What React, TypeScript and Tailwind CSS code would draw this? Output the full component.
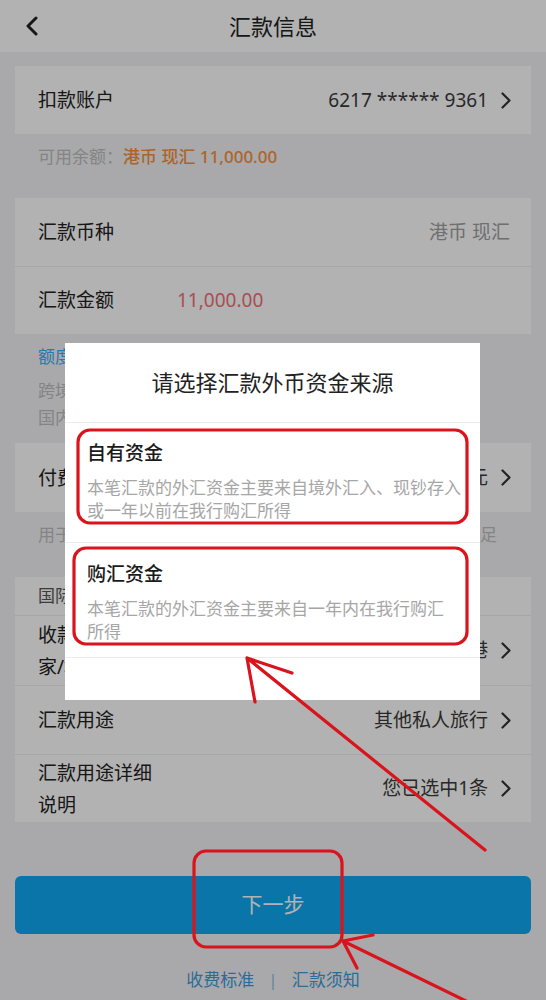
import type { ReactNode } from 'react'

function Chevron() {
  return (
    <svg width="10" height="17" viewBox="0 0 10 17" className="shrink-0">
      <path d="M1.5 1.5 L8.5 8.5 L1.5 15.5" fill="none" stroke="#333" strokeWidth="2.2" strokeLinecap="round" strokeLinejoin="round" />
    </svg>
  )
}

function Row({ label, children, className = '' }: { label: ReactNode; children?: ReactNode; className?: string }) {
  return (
    <div className={`flex items-center justify-between pl-[23px] pr-[20px] ${className}`}>
      <div className="w-[118px] text-[19px] leading-[32px] text-[#222]">{label}</div>
      {children}
    </div>
  )
}

function Value({ text }: { text: string }) {
  return (
    <div className="flex items-center gap-[13px] text-[19px] text-[#3a3a3a]">
      <span className="whitespace-nowrap">{text}</span>
      <Chevron />
    </div>
  )
}

const sources = [
  {
    title: '自有资金',
    lines: ['本笔汇款的外汇资金主要来自境外汇入、现钞存入', '或一年以前在我行购汇所得'],
    h: 'h-[120px] pt-[16px]',
  },
  {
    title: '购汇资金',
    lines: ['本笔汇款的外汇资金主要来自一年内在我行购汇', '所得'],
    h: 'h-[115px] pt-[17px]',
  },
]

export default function App() {
  return (
    <div className="relative h-[1000px] overflow-hidden bg-[#f2f2f6] font-['Noto_Sans','Noto_Sans_CJK_SC',sans-serif]">
      <header className="grid h-[52px] grid-cols-[60px_1fr_60px] items-center bg-white">
        <svg width="14" height="20" viewBox="0 0 14 20" className="ml-[25px]">
          <path d="M11 2 L3 10 L11 18" fill="none" stroke="#222" strokeWidth="3" strokeLinecap="round" strokeLinejoin="round" />
        </svg>
        <h1 className="text-center text-[22px] text-[#222]">汇款信息</h1>
        <div />
      </header>

      <main className="px-[15px] pt-[14px]">
        <div className="bg-white">
          <Row label="扣款账户" className="h-[68px]">
            <Value text="6217 ****** 9361" />
          </Row>
        </div>
        <div className="h-[64px] pl-[23px] pt-[12px] text-[17px] leading-[22px] text-[#bdbdbd]">
          可用余额：<span className="font-medium text-[#f7903c]">港币 现汇 11,000.00</span>
        </div>

        <div className="bg-white">
          <Row label="汇款币种" className="h-[68px]">
            <span className="pr-[1px] text-[19px] text-[#a0a0a0]">港币 现汇</span>
          </Row>
          <div className="flex h-[68px] items-center border-t border-[#eeeeee] pl-[23px]">
            <div className="w-[139px] text-[19px] text-[#222]">汇款金额</div>
            <span className="text-[19px] text-[#f27079]">11,000.00</span>
          </div>
        </div>
        <div className="px-[23px] pt-[12px] pb-[12px] text-[17px]">
          <div className="leading-[22px] text-[#36b0f5]">额度查询</div>
          <div className="mt-[9px] leading-[27px] text-[#bdbdbd]">
            <div>跨境汇款个人年度便利化额度为等值5万美元</div>
            <div>国内汇款无额度限制</div>
          </div>
        </div>

        <div className="bg-white">
          <Row label="付费方式" className="h-[69px]">
            <Value text="汇款人付费 共150元" />
          </Row>
        </div>
        <div className="h-[65px] whitespace-nowrap pl-[23px] pt-[12px] text-[17px] leading-[22px] text-[#bdbdbd]">
          用于支付汇款手续费及电报费的账户，请确保该账户余额充足
        </div>

        <div className="bg-white">
          <div className="flex h-[38px] items-center pl-[23px] text-[17px] text-[#555]">国际收支申报信息</div>
          <Row label="收款人常驻国家/地区" className="h-[70px] border-t border-[#eeeeee]">
            <Value text="中国香港" />
          </Row>
          <Row label="汇款用途" className="h-[69px] border-t border-[#eeeeee]">
            <Value text="其他私人旅行" />
          </Row>
          <Row label="汇款用途详细说明" className="h-[68px] border-t border-[#eeeeee]">
            <Value text="您已选中1条" />
          </Row>
        </div>

        <button className="mt-[54px] flex h-[58px] w-full items-center justify-center rounded-[6px] bg-[#0fa8f2] text-[21px] text-white">
          下一步
        </button>
        <div className="mt-[34px] flex items-center justify-center gap-[14px] text-[17px] leading-[24px] text-[#3a9ddb]">
          <span>收费标准</span>
          <span className="text-[#8fbfdf]">|</span>
          <span>汇款须知</span>
        </div>
      </main>

      <div className="absolute inset-0 bg-black/30" />

      <div className="absolute left-[65px] top-[343px] h-[357px] w-[415px] bg-white">
        <div className="flex h-[80px] items-center justify-center border-b border-[#ececec] text-[22px] text-[#222]">
          请选择汇款外币资金来源
        </div>
        {sources.map((s) => (
          <div key={s.title} className={`border-b border-[#ececec] pl-[22px] ${s.h}`}>
            <div className="text-[19px] font-medium leading-[28px] text-[#1a1a1a]">{s.title}</div>
            <div className="mt-[9px] text-[17px] leading-[23px] text-[#a6a6a6]">
              {s.lines.map((l) => (
                <div key={l} className="whitespace-nowrap">{l}</div>
              ))}
            </div>
          </div>
        ))}
      </div>

      <svg className="pointer-events-none absolute inset-0 h-full w-full" viewBox="0 0 546 1000">
        <g fill="none" stroke="#d9141c" strokeWidth="3.2" strokeLinecap="round" strokeLinejoin="round">
          <rect x="78" y="430" width="389" height="93" rx="12" />
          <rect x="74" y="548" width="393" height="96" rx="12" />
          <rect x="194" y="851" width="148" height="96" rx="12" />
          <path d="M485 850 L247 658 M247 658 L292 673 M247 658 L255 702" />
          <path d="M505 1020 L343 941 M343 941 L373 935 M343 941 L357 968" />
        </g>
      </svg>
    </div>
  )
}
